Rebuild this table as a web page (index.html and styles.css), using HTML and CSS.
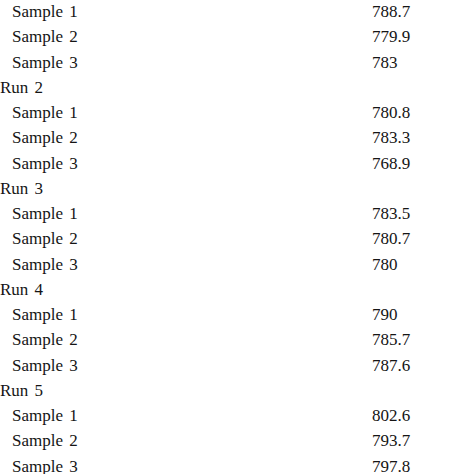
FILE: index.html
```html
<!DOCTYPE html>
<html>
<head>
<meta charset="utf-8">
<link rel="stylesheet" href="styles.css">
</head>
<body>
<div class="table">
  <div class="row sub"><span class="label">Sample 1</span><span class="val">788.7</span></div>
  <div class="row sub"><span class="label">Sample 2</span><span class="val">779.9</span></div>
  <div class="row sub"><span class="label">Sample 3</span><span class="val">783</span></div>
  <div class="row run"><span class="label">Run 2</span><span class="val"></span></div>
  <div class="row sub"><span class="label">Sample 1</span><span class="val">780.8</span></div>
  <div class="row sub"><span class="label">Sample 2</span><span class="val">783.3</span></div>
  <div class="row sub"><span class="label">Sample 3</span><span class="val">768.9</span></div>
  <div class="row run"><span class="label">Run 3</span><span class="val"></span></div>
  <div class="row sub"><span class="label">Sample 1</span><span class="val">783.5</span></div>
  <div class="row sub"><span class="label">Sample 2</span><span class="val">780.7</span></div>
  <div class="row sub"><span class="label">Sample 3</span><span class="val">780</span></div>
  <div class="row run"><span class="label">Run 4</span><span class="val"></span></div>
  <div class="row sub"><span class="label">Sample 1</span><span class="val">790</span></div>
  <div class="row sub"><span class="label">Sample 2</span><span class="val">785.7</span></div>
  <div class="row sub"><span class="label">Sample 3</span><span class="val">787.6</span></div>
  <div class="row run"><span class="label">Run 5</span><span class="val"></span></div>
  <div class="row sub"><span class="label">Sample 1</span><span class="val">802.6</span></div>
  <div class="row sub"><span class="label">Sample 2</span><span class="val">793.7</span></div>
  <div class="row sub"><span class="label">Sample 3</span><span class="val">797.8</span></div>
</div>
</body>
</html>
```
FILE: styles.css
```css
html, body {
  margin: 0;
  padding: 0;
  background: #ffffff;
}
body {
  font-family: "Liberation Serif", "Times New Roman", serif;
  font-size: 17px;
  color: #151515;
  overflow: hidden;
}
.table {
  margin-top: -1px;
  display: flex;
  flex-direction: column;
}
.row {
  display: grid;
  grid-template-columns: 372px 1fr;
  height: 25.25px;
  line-height: 25.25px;
  white-space: nowrap;
}
.sub .label {
  padding-left: 12px;
  word-spacing: 2px;
}
.run .label {
  padding-left: 0;
  word-spacing: 2px;
}
```
